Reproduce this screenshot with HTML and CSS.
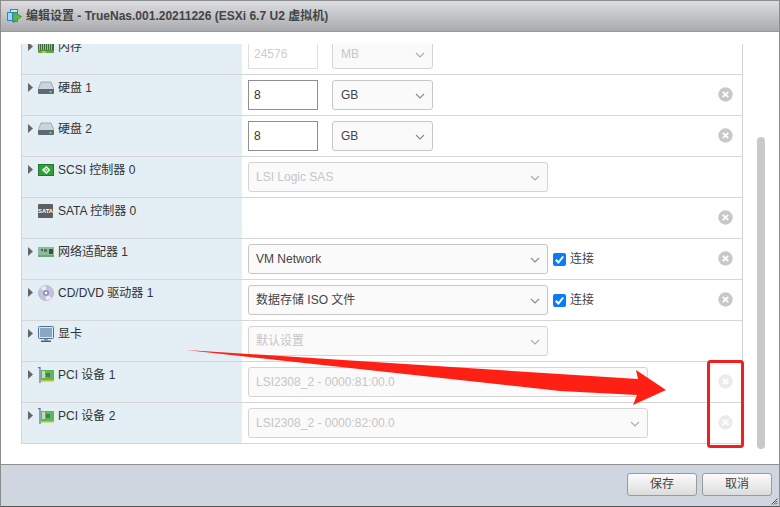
FILE: index.html
```html
<!DOCTYPE html>
<html lang="zh">
<head>
<meta charset="utf-8">
<title>编辑设置</title>
<link rel="stylesheet" href="styles.css">
</head>
<body>
<svg class="defs" width="0" height="0">
  <defs>
    <symbol id="chev" viewBox="0 0 10 6"><path d="M1 1l4 4 4-4" fill="none" stroke="#8a8a8a" stroke-width="1.1"/></symbol>
    <symbol id="x" viewBox="0 0 15 15"><circle cx="7.5" cy="7.5" r="7.2" fill="currentColor"/><path d="M4.8 4.8l5.4 5.400M10.200 4.800l-5.400 5.400" stroke="#fff" stroke-width="1.8"/></symbol>
    <symbol id="tri" viewBox="0 0 5 9"><path d="M0 0l5 4.5L0 9z" fill="#666"/></symbol>
    <symbol id="mem" viewBox="0 0 16 16"><rect x="0" y="2" width="16" height="10" fill="#3f6b3f"/><path d="M1.500 3v8M3.500 3v8M5.500 3v8M7.500 3v8M9.500 3v8M11.500 3v8M13.500 3v8" stroke="#9fb79f" stroke-width="1"/><rect x="0" y="11.500" width="16" height="2.500" fill="#5fae2f"/><rect x="4" y="12.500" width="4" height="1" fill="#e7e7a0"/></symbol>
    <symbol id="disk" viewBox="0 0 16 16"><path d="M3 2h10l3 7.500H0z" fill="#ccd3da" stroke="#8694a2" stroke-width=".7"/><rect x="0" y="9" width="16" height="5" rx="1" fill="#5a6a78"/><rect x="11.500" y="11" width="2" height="1.500" fill="#8fe05f"/></symbol>
    <symbol id="scsi" viewBox="0 0 16 16"><rect x="0" y="2" width="16" height="12" fill="#2f9f3a"/><rect x=".5" y="2.500" width="15" height="11" fill="none" stroke="#1f7a2a"/><path d="M9 4.500L5 8l4 3.500" fill="none" stroke="#fff" stroke-width="1.600"/><path d="M9 5.500L11.500 8 9 10.500" fill="none" stroke="#fff" stroke-width="1.200"/><rect x="7.500" y="7.300" width="2" height="1.400" fill="#fff"/></symbol>
    <symbol id="sata" viewBox="0 0 16 16"><rect x="0" y="1" width="15" height="14" rx="1" fill="#5f5f5f"/><text x="7.500" y="10.300" text-anchor="middle" font-family="Liberation Sans" font-size="5.800" font-weight="bold" fill="#fff">SATA</text></symbol>
    <symbol id="nic" viewBox="0 0 16 16"><rect x="0" y="3" width="16" height="10" fill="#8dbb9b"/><rect x="0" y="11" width="16" height="2" fill="#6da57d"/><rect x="3" y="5" width="2" height="2" fill="#3e6b4a"/><rect x="6" y="5" width="3" height="3" fill="#4f7f5c"/><rect x="11" y="5" width="4" height="5" fill="#2f5a3c"/></symbol>
    <symbol id="cd" viewBox="0 0 16 16"><circle cx="8" cy="8" r="7.500" fill="#c4c2dc" stroke="#aeaebc" stroke-width=".7"/><path d="M8 8L2.500 3A7 7 0 0 1 8 1zM8 8l5.500 5A7 7 0 0 1 8 15z" fill="#ecebf4"/><circle cx="8" cy="8" r="3" fill="#8f90b4"/><circle cx="8" cy="8" r="1.300" fill="#fff"/></symbol>
    <symbol id="mon" viewBox="0 0 16 16"><rect x=".5" y=".5" width="15" height="12" rx="1" fill="#dfe7ee" stroke="#4f7191"/><rect x="2" y="2" width="12" height="9" fill="#8aa6c4"/><rect x="6" y="13" width="4" height="1.500" fill="#8f9fae"/><rect x="3" y="14.500" width="10" height="1.500" fill="#3f6283"/></symbol>
    <symbol id="pci" viewBox="0 0 16 16"><path d="M0 .5h2V16" fill="none" stroke="#6b7599" stroke-width="1.300"/><rect x="3" y="3" width="13" height="10" fill="#5cb85c"/><rect x="4" y="4" width="3" height="7" fill="#b9e3a9"/><rect x="8" y="6" width="4" height="4" fill="#5f6f5f"/><rect x="3" y="13" width="13" height="1.500" fill="#c2c234"/></symbol>
    <symbol id="vm" viewBox="0 0 15 15"><rect x="3.500" y=".5" width="7" height="6" fill="#cfe8f8" stroke="#2b85cf"/><rect x=".5" y="3.500" width="7" height="8" fill="#a8d6f2" stroke="#2b85cf"/><rect x="5.500" y="3.500" width="5" height="9" fill="#f0f8ff" stroke="#2b85cf"/><path d="M6.500 3l8 4.500-8 6z" fill="#58b93a" stroke="#2f8a2a" stroke-width=".7"/></symbol>
  </defs>
</svg>

<div class="dialog">
  <header class="titlebar">
    <svg class="title-icon"><use href="#vm"/></svg>
    <span class="title-text">编辑设置 - TrueNas.001.20211226 (ESXi 6.7 U2 虚拟机)</span>
  </header>

  <main class="content">
    <div class="viewport">
      <div class="table">
        <div class="row">
          <div class="label"><svg class="tri"><use href="#tri"/></svg><svg class="icon"><use href="#mem"/></svg><span>内存</span></div>
          <div class="cell">
            <div class="input off">24576</div>
            <div class="select unit off"><span>MB</span><svg class="chev"><use href="#chev"/></svg></div>
          </div>
        </div>
        <div class="row">
          <div class="label"><svg class="tri"><use href="#tri"/></svg><svg class="icon"><use href="#disk"/></svg><span>硬盘 1</span></div>
          <div class="cell">
            <div class="input">8</div>
            <div class="select unit"><span>GB</span><svg class="chev"><use href="#chev"/></svg></div>
            <svg class="remove"><use href="#x"/></svg>
          </div>
        </div>
        <div class="row">
          <div class="label"><svg class="tri"><use href="#tri"/></svg><svg class="icon"><use href="#disk"/></svg><span>硬盘 2</span></div>
          <div class="cell">
            <div class="input">8</div>
            <div class="select unit"><span>GB</span><svg class="chev"><use href="#chev"/></svg></div>
            <svg class="remove"><use href="#x"/></svg>
          </div>
        </div>
        <div class="row">
          <div class="label"><svg class="tri"><use href="#tri"/></svg><svg class="icon"><use href="#scsi"/></svg><span>SCSI 控制器 0</span></div>
          <div class="cell">
            <div class="select wide off"><span>LSI Logic SAS</span><svg class="chev"><use href="#chev"/></svg></div>
          </div>
        </div>
        <div class="row">
          <div class="label"><span class="tri-gap"></span><svg class="icon"><use href="#sata"/></svg><span>SATA 控制器 0</span></div>
          <div class="cell">
            <svg class="remove"><use href="#x"/></svg>
          </div>
        </div>
        <div class="row">
          <div class="label"><svg class="tri"><use href="#tri"/></svg><svg class="icon"><use href="#nic"/></svg><span>网络适配器 1</span></div>
          <div class="cell">
            <div class="select wide"><span>VM Network</span><svg class="chev"><use href="#chev"/></svg></div>
            <div class="check"><span class="box"><svg viewBox="0 0 13 13"><path d="M2.800 6.800l2.600 2.700 4.800-6" fill="none" stroke="#fff" stroke-width="2"/></svg></span><span>连接</span></div>
            <svg class="remove"><use href="#x"/></svg>
          </div>
        </div>
        <div class="row">
          <div class="label"><svg class="tri"><use href="#tri"/></svg><svg class="icon"><use href="#cd"/></svg><span>CD/DVD 驱动器 1</span></div>
          <div class="cell">
            <div class="select wide"><span>数据存储 ISO 文件</span><svg class="chev"><use href="#chev"/></svg></div>
            <div class="check"><span class="box"><svg viewBox="0 0 13 13"><path d="M2.800 6.800l2.600 2.700 4.800-6" fill="none" stroke="#fff" stroke-width="2"/></svg></span><span>连接</span></div>
            <svg class="remove"><use href="#x"/></svg>
          </div>
        </div>
        <div class="row">
          <div class="label"><svg class="tri"><use href="#tri"/></svg><svg class="icon"><use href="#mon"/></svg><span>显卡</span></div>
          <div class="cell">
            <div class="select wide off"><span>默认设置</span><svg class="chev"><use href="#chev"/></svg></div>
          </div>
        </div>
        <div class="row">
          <div class="label"><svg class="tri"><use href="#tri"/></svg><svg class="icon"><use href="#pci"/></svg><span>PCI 设备 1</span></div>
          <div class="cell">
            <div class="select long off"><span>LSI2308_2 - 0000:81:00.0</span><svg class="chev"><use href="#chev"/></svg></div>
            <svg class="remove faint"><use href="#x"/></svg>
          </div>
        </div>
        <div class="row">
          <div class="label"><svg class="tri"><use href="#tri"/></svg><svg class="icon"><use href="#pci"/></svg><span>PCI 设备 2</span></div>
          <div class="cell">
            <div class="select long off"><span>LSI2308_2 - 0000:82:00.0</span><svg class="chev"><use href="#chev"/></svg></div>
            <svg class="remove faint"><use href="#x"/></svg>
          </div>
        </div>
      </div>
    </div>
    <div class="scrollbar"></div>
  </main>

  <footer class="footer">
    <button class="btn">保存</button>
    <button class="btn">取消</button>
    <svg class="grip" viewBox="0 0 7 7"><path d="M6.500 0.500L0.500 6.500M6.500 2.800L2.800 6.500M6.500 5L5 6.500" stroke="#555" stroke-width="1"/></svg>
  </footer>

  <svg class="markup" viewBox="0 0 780 507">
    <polygon points="186,350 638,379 636,370 666,390 633,405 637,395 560,391" fill="#ff2015"/>
    <rect x="708.500" y="361.500" width="34" height="85" rx="2" fill="none" stroke="#f02020" stroke-width="3"/>
  </svg>
</div>
</body>
</html>
```
FILE: styles.css
```css
* { box-sizing: border-box; }
html, body { margin: 0; height: 100%; overflow: hidden; background: #fff; }
body { font-family: "Liberation Sans", "Noto Sans CJK SC", sans-serif; font-size: 12px; color: #333; }
.defs { position: absolute; }

.dialog {
  position: relative;
  width: 780px;
  height: 507px;
  display: flex;
  flex-direction: column;
  border: 1px solid #8c8c8c;
  border-bottom-color: #555;
  background: #fff;
}

.titlebar {
  height: 31px;
  flex: none;
  display: flex;
  align-items: center;
  padding-left: 6px;
  gap: 4px;
  background: linear-gradient(#dcdde1, #a9abae);
  border-bottom: 1px solid #999;
}
.title-icon { width: 15px; height: 15px; }
.title-text { font-weight: bold; color: #444; line-height: 16px; }

.content {
  flex: 1;
  min-height: 0;
  display: flex;
  padding: 12px 14px 0 20px;
  background: #fff;
}
.viewport { width: 722px; height: 400px; overflow: hidden; flex: none; }
.table {
  margin-top: -10px;
  border-left: 1px solid #d4d4d4;
  border-right: 1px solid #d4d4d4;
}
.row {
  height: 41px;
  display: grid;
  grid-template-columns: 220px 1fr;
  border-bottom: 1px solid #d6d6d6;
}
.label {
  background: #e3eef5;
  display: flex;
  align-items: flex-start;
  padding: 5px 0 0 6px;
  line-height: 16px;
  color: #333;
}
.tri { width: 5px; height: 9px; margin: 3px 5px 0 0; flex: none; }
.tri-gap { width: 10px; flex: none; }
.icon { width: 16px; height: 16px; margin-right: 4px; flex: none; }

.cell {
  display: flex;
  align-items: flex-start;
  padding: 5px 9px 0 6px;
  position: relative;
}
.input {
  width: 70px;
  height: 30px;
  border: 1px solid #8f8f8f;
  padding-left: 5px;
  line-height: 28px;
  font-size: 12px;
  color: #333;
  margin-right: 14px;
}
.input.off { border-color: #dedede; color: #ccc; }

.select {
  height: 30px;
  border: 1px solid #c6c6c6;
  border-radius: 3px;
  background: #fafafa;
  display: flex;
  align-items: center;
  justify-content: space-between;
  padding: 0 7px 0 7px;
  line-height: 16px;
  color: #444;
  flex: none;
}
.select.off { border-color: #d4d4d4; color: #c6c6c6; }
.select.off .chev { opacity: .7; }
.unit { width: 101px; padding-left: 8px; }
.wide { width: 300px; }
.long { width: 400px; }
.chev { width: 10px; height: 6px; margin-top: 2px; flex: none; }

.check { display: flex; align-items: center; height: 30px; line-height: 16px; margin-left: 5px; gap: 4px; color: #444; }
.box { width: 13px; height: 13px; border-radius: 2px; background: #0a7cf5; display: block; }
.box svg { display: block; width: 13px; height: 13px; }

.remove { width: 15px; height: 15px; margin: 7px 0 0 auto; color: #c8c8c8; flex: none; }
.remove.faint { color: #ebebeb; }

.scrollbar {
  width: 8px;
  height: 312px;
  margin: 93px 0 0 14px;
  border-radius: 4px;
  background: #c9c9c9;
  flex: none;
}

.footer {
  position: relative;
  height: 42px;
  flex: none;
  display: flex;
  justify-content: flex-end;
  align-items: flex-start;
  gap: 5px;
  padding: 8px 7px 0 0;
  background: #d0d6df;
  border-top: 1px solid #8f8f8f;
}
.btn {
  width: 70px;
  height: 23px;
  padding: 0 0 2px;
  border: 1px solid #9a9a9a;
  border-radius: 3px;
  background: linear-gradient(#fbfbfb, #dcdcdc);
  font: 12px/16px "Liberation Sans", "Noto Sans CJK SC", sans-serif;
  color: #444;
}
.grip { position: absolute; right: 1px; bottom: 1px; width: 7px; height: 7px; }
.markup { position: absolute; left: -1px; top: -1px; width: 780px; height: 507px; pointer-events: none; }
```
